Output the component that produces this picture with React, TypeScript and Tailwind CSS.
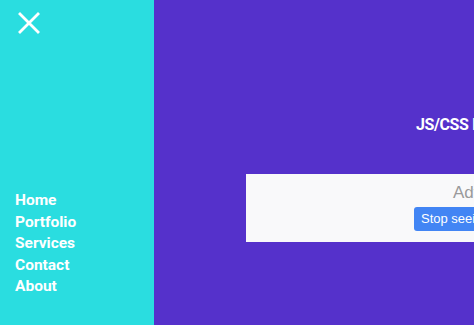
import React from "react";

const links = ["Home", "Portfolio", "Services", "Contact", "About"];

const App = () => {
  return (
    <div className="flex h-[325px] w-[474px] overflow-hidden">
      <aside className="flex w-[154px] shrink-0 flex-col bg-[#2adde0] pl-[15px] pr-4 pt-[12px]">
        <button className="ml-[1px] flex h-[22px] w-[26px] items-center justify-center">
          <svg width="24" height="24" viewBox="0 0 24 24" fill="none" stroke="white" strokeWidth="2.8" strokeLinecap="square">
            <path d="M3 3 L21 21 M21 3 L3 21" />
          </svg>
        </button>
        <nav className="mt-[156px] flex flex-col font-['Roboto',sans-serif] text-[15.5px] font-bold leading-[21.5px] text-white">
          {links.map((link) => (
            <a key={link} href="#">{link}</a>
          ))}
        </nav>
      </aside>
      <main className="flex min-w-0 flex-1 flex-col overflow-hidden bg-[#5531cb] pt-[115px]">
        <div className="whitespace-nowrap pl-[262px] font-['Roboto',sans-serif] text-[16px] font-bold leading-[20px] tracking-[-0.4px] text-white">
          JS/CSS Implementation
        </div>
        <div className="ml-[92px] mt-[39px] flex h-[68px] w-[420px] shrink-0 flex-col bg-[#f9f9fa] pl-[168px] pt-[8px] font-['Liberation_Sans',sans-serif] whitespace-nowrap">
          <span className="pl-[39px] text-[17px] leading-[22px] text-[#9a9a9a]">Advertisement</span>
          <button className="mt-[3px] h-[24px] w-fit rounded-[3px] bg-[#4285f4] px-[7px] text-[13px] leading-[24px] text-white">
            Stop seeing this ad
          </button>
        </div>
      </main>
    </div>
  );
};

export default App;
